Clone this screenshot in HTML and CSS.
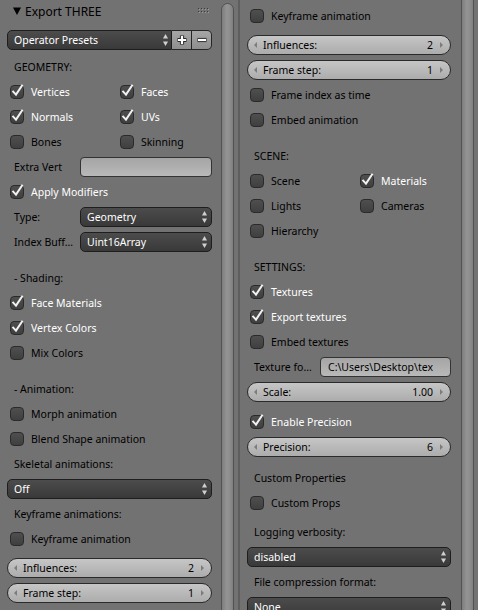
FILE: index.html
```html
<!DOCTYPE html>
<html>
<head>
<meta charset="utf-8">
<link rel="stylesheet" href="styles.css">
</head>
<body>
<div class="app">
  <div class="region left">
    <div class="content">
      <div class="head">
        <svg class="tri" width="8" height="8" viewBox="0 0 8 8"><polygon points="0,0.5 8,0.5 4,8" fill="#000"/></svg>
        <span class="title">Export THREE</span>
        <svg class="grip" width="11" height="6" viewBox="0 0 11 6">
          <g fill="#9a9a9a"><rect x="1" y="1" width="1" height="1"/><rect x="4" y="1" width="1" height="1"/><rect x="7" y="1" width="1" height="1"/><rect x="10" y="1" width="1" height="1"/><rect x="1" y="4" width="1" height="1"/><rect x="4" y="4" width="1" height="1"/><rect x="7" y="4" width="1" height="1"/><rect x="10" y="4" width="1" height="1"/></g>
          <g fill="#3c3c3c"><rect x="0" y="0" width="1" height="1"/><rect x="3" y="0" width="1" height="1"/><rect x="6" y="0" width="1" height="1"/><rect x="9" y="0" width="1" height="1"/><rect x="0" y="3" width="1" height="1"/><rect x="3" y="3" width="1" height="1"/><rect x="6" y="3" width="1" height="1"/><rect x="9" y="3" width="1" height="1"/></g>
        </svg>
      </div>
      <div class="presets">
        <div class="menu joined"><span class="mtext">Operator Presets</span><svg class="ud" width="5" height="12" viewBox="0 0 5 12"><polygon points="2.5,0 5,4.5 0,4.5"/><polygon points="0,7.5 5,7.5 2.5,12"/></svg></div>
        <div class="btn"><svg width="12" height="12" viewBox="0 0 12 12"><path d="M6 1.5V10.5M1.5 6H10.5" stroke="#2a2a2a" stroke-width="4.2" fill="none"/><path d="M6 2V10M2 6H10" stroke="#fff" stroke-width="2.2" fill="none"/></svg></div>
        <div class="btn last"><svg width="12" height="12" viewBox="0 0 12 12"><path d="M1.5 6H10.5" stroke="#2a2a2a" stroke-width="4.2" fill="none"/><path d="M2 6H10" stroke="#fff" stroke-width="2.2" fill="none"/></svg></div>
      </div>
      <div class="row lbl top4">GEOMETRY:</div>
      <div class="grid2">
        <div class="row check on"><span class="box"><svg viewBox="0 0 14 14"><path d="M3.2 6.6L6 9.6L12 0.6"/></svg></span><span class="ct">Vertices</span></div>
        <div class="row check on"><span class="box"><svg viewBox="0 0 14 14"><path d="M3.2 6.6L6 9.6L12 0.6"/></svg></span><span class="ct">Faces</span></div>
        <div class="row check on"><span class="box"><svg viewBox="0 0 14 14"><path d="M3.2 6.6L6 9.6L12 0.6"/></svg></span><span class="ct">Normals</span></div>
        <div class="row check on"><span class="box"><svg viewBox="0 0 14 14"><path d="M3.2 6.6L6 9.6L12 0.6"/></svg></span><span class="ct">UVs</span></div>
        <div class="row check"><span class="box"></span><span class="ct">Bones</span></div>
        <div class="row check"><span class="box"></span><span class="ct">Skinning</span></div>
      </div>
      <div class="row prop"><span class="plabel">Extra Vert</span><div class="field"></div></div>
      <div class="row check on"><span class="box"><svg viewBox="0 0 14 14"><path d="M3.2 6.6L6 9.6L12 0.6"/></svg></span><span class="ct">Apply Modifiers</span></div>
      <div class="row prop"><span class="plabel">Type:</span><div class="menu"><span class="mtext">Geometry</span><svg class="ud" width="5" height="12" viewBox="0 0 5 12"><polygon points="2.5,0 5,4.5 0,4.5"/><polygon points="0,7.5 5,7.5 2.5,12"/></svg></div></div>
      <div class="row prop"><span class="plabel">Index Buff…</span><div class="menu"><span class="mtext">Uint16Array</span><svg class="ud" width="5" height="12" viewBox="0 0 5 12"><polygon points="2.5,0 5,4.5 0,4.5"/><polygon points="0,7.5 5,7.5 2.5,12"/></svg></div></div>
      <div class="sep"></div>
      <div class="row lbl">- Shading:</div>
      <div class="row check on"><span class="box"><svg viewBox="0 0 14 14"><path d="M3.2 6.6L6 9.6L12 0.6"/></svg></span><span class="ct">Face Materials</span></div>
      <div class="row check on"><span class="box"><svg viewBox="0 0 14 14"><path d="M3.2 6.6L6 9.6L12 0.6"/></svg></span><span class="ct">Vertex Colors</span></div>
      <div class="row check"><span class="box"></span><span class="ct">Mix Colors</span></div>
      <div class="sep"></div>
      <div class="row lbl">- Animation:</div>
      <div class="row check"><span class="box"></span><span class="ct">Morph animation</span></div>
      <div class="row check"><span class="box"></span><span class="ct">Blend Shape animation</span></div>
      <div class="row lbl">Skeletal animations:</div>
      <div class="row"><div class="menu"><span class="mtext">Off</span><svg class="ud" width="5" height="12" viewBox="0 0 5 12"><polygon points="2.5,0 5,4.5 0,4.5"/><polygon points="0,7.5 5,7.5 2.5,12"/></svg></div></div>
      <div class="row lbl">Keyframe animations:</div>
      <div class="row check"><span class="box"></span><span class="ct">Keyframe animation</span></div>
      <div class="row slrow top4"><div class="slider"><svg class="arr" width="3" height="6" viewBox="0 0 3 6"><polygon points="3,0 3,6 0,3"/></svg><span class="sl">Influences:</span><span class="sv">2</span><svg class="arr r" width="3" height="6" viewBox="0 0 3 6"><polygon points="0,0 0,6 3,3"/></svg></div></div>
      <div class="row slrow"><div class="slider"><svg class="arr" width="3" height="6" viewBox="0 0 3 6"><polygon points="3,0 3,6 0,3"/></svg><span class="sl">Frame step:</span><span class="sv">1</span><svg class="arr r" width="3" height="6" viewBox="0 0 3 6"><polygon points="0,0 0,6 3,3"/></svg></div></div>
    </div>
    <div class="thumb tl"></div>
  </div>

  <div class="region right">
    <div class="content rc">
      <div class="row check"><span class="box"></span><span class="ct">Keyframe animation</span></div>
      <div class="row slrow top4"><div class="slider"><svg class="arr" width="3" height="6" viewBox="0 0 3 6"><polygon points="3,0 3,6 0,3"/></svg><span class="sl">Influences:</span><span class="sv">2</span><svg class="arr r" width="3" height="6" viewBox="0 0 3 6"><polygon points="0,0 0,6 3,3"/></svg></div></div>
      <div class="row slrow"><div class="slider"><svg class="arr" width="3" height="6" viewBox="0 0 3 6"><polygon points="3,0 3,6 0,3"/></svg><span class="sl">Frame step:</span><span class="sv">1</span><svg class="arr r" width="3" height="6" viewBox="0 0 3 6"><polygon points="0,0 0,6 3,3"/></svg></div></div>
      <div class="row check"><span class="box"></span><span class="ct">Frame index as time</span></div>
      <div class="row check"><span class="box"></span><span class="ct">Embed animation</span></div>
      <div class="sep"></div>
      <div class="row lbl">SCENE:</div>
      <div class="grid2">
        <div class="row check"><span class="box"></span><span class="ct">Scene</span></div>
        <div class="row check on"><span class="box"><svg viewBox="0 0 14 14"><path d="M3.2 6.6L6 9.6L12 0.6"/></svg></span><span class="ct">Materials</span></div>
        <div class="row check"><span class="box"></span><span class="ct">Lights</span></div>
        <div class="row check"><span class="box"></span><span class="ct">Cameras</span></div>
        <div class="row check"><span class="box"></span><span class="ct">Hierarchy</span></div>
      </div>
      <div class="sep"></div>
      <div class="row lbl">SETTINGS:</div>
      <div class="row check on"><span class="box"><svg viewBox="0 0 14 14"><path d="M3.2 6.6L6 9.6L12 0.6"/></svg></span><span class="ct">Textures</span></div>
      <div class="row check on"><span class="box"><svg viewBox="0 0 14 14"><path d="M3.2 6.6L6 9.6L12 0.6"/></svg></span><span class="ct">Export textures</span></div>
      <div class="row check"><span class="box"></span><span class="ct">Embed textures</span></div>
      <div class="row prop"><span class="plabel">Texture fo…</span><div class="field"><span class="ftext">C:\Users\Desktop\tex</span></div></div>
      <div class="row slrow"><div class="slider"><svg class="arr" width="3" height="6" viewBox="0 0 3 6"><polygon points="3,0 3,6 0,3"/></svg><span class="sl">Scale:</span><span class="sv">1.00</span><svg class="arr r" width="3" height="6" viewBox="0 0 3 6"><polygon points="0,0 0,6 3,3"/></svg></div></div>
      <div class="row check on top5"><span class="box"><svg viewBox="0 0 14 14"><path d="M3.2 6.6L6 9.6L12 0.6"/></svg></span><span class="ct">Enable Precision</span></div>
      <div class="row slrow"><div class="slider"><svg class="arr" width="3" height="6" viewBox="0 0 3 6"><polygon points="3,0 3,6 0,3"/></svg><span class="sl">Precision:</span><span class="sv">6</span><svg class="arr r" width="3" height="6" viewBox="0 0 3 6"><polygon points="0,0 0,6 3,3"/></svg></div></div>
      <div class="row lbl top6">Custom Properties</div>
      <div class="row check"><span class="box"></span><span class="ct">Custom Props</span></div>
      <div class="row lbl top4">Logging verbosity:</div>
      <div class="row"><div class="menu"><span class="mtext">disabled</span><svg class="ud" width="5" height="12" viewBox="0 0 5 12"><polygon points="2.5,0 5,4.5 0,4.5"/><polygon points="0,7.5 5,7.5 2.5,12"/></svg></div></div>
      <div class="row lbl">File compression format:</div>
      <div class="row"><div class="menu"><span class="mtext">None</span><svg class="ud" width="5" height="12" viewBox="0 0 5 12"><polygon points="2.5,0 5,4.5 0,4.5"/><polygon points="0,7.5 5,7.5 2.5,12"/></svg></div></div>
    </div>
    <div class="thumb tr"></div>
  </div>
</div>
</body>
</html>
```

FILE: styles.css
```css
html, body {
  margin: 0;
  padding: 0;
}
body {
  width: 478px;
  height: 610px;
  overflow: hidden;
  background: #727272;
  font-family: "Noto Sans", "Open Sans", sans-serif;
  font-size: 10.5px;
  color: #000;
}
.app {
  display: flex;
  height: 610px;
  overflow: hidden;
}
.region {
  display: flex;
  height: 610px;
  overflow: hidden;
  flex: none;
}
.region.left {
  width: 238px;
  border-right: 2px solid #5e5e5e;
}
.region.right {
  width: 238px;
}
.content {
  flex: none;
  width: 205px;
  padding-left: 7px;
}
.content.rc {
  width: 204px;
  padding-top: 3.5px;
}
.thumb {
  flex: none;
  width: 13px;
  box-sizing: border-box;
  border: 1px solid #525252;
  background: linear-gradient(to right, #7e7e7e, #949494 45%, #8c8c8c 75%, #7e7e7e);
}
.thumb.tl {
  margin-left: 9px;
  margin-top: 3px;
  height: 640px;
  border-radius: 7px 7px 0 0;
}
.thumb.tr {
  margin-left: 10px;
  margin-top: -20px;
  height: 660px;
  border-radius: 7px;
  border-top: none;
  border-bottom: none;
}

/* header */
.head {
  height: 22px;
  display: flex;
  align-items: center;
}
.tri {
  margin-left: 6px;
  flex: none;
}
.title {
  margin-left: 4px;
  font-size: 12px;
}
.grip {
  margin-left: auto;
  margin-right: 3px;
}

/* presets */
.presets {
  margin-top: 8px;
  height: 20px;
  display: flex;
}
.btn {
  width: 20px;
  height: 20px;
  box-sizing: border-box;
  border: 1px solid #262626;
  border-left: none;
  background: linear-gradient(#a6a6a6, #8e8e8e);
  display: flex;
  align-items: center;
  justify-content: center;
  flex: none;
}
.btn.last {
  border-radius: 0 5px 5px 0;
}

/* rows */
.row {
  height: 25px;
  display: flex;
  align-items: center;
  white-space: nowrap;
}
.lbl {
  padding-left: 7px;
}
.top4 { margin-top: 4px; }
.top5 { margin-top: 5px; }
.top6 { margin-top: 6px; }
.sep { height: 11px; }

.grid2 {
  display: grid;
  grid-template-columns: 110px 1fr;
}

/* checkboxes */
.check {
  padding-left: 3px;
}
.box {
  flex: none;
  width: 14px;
  height: 14px;
  box-sizing: border-box;
  border: 1px solid #2a2a2a;
  border-radius: 4px;
  background: linear-gradient(#4f4f4f, #3f3f3f);
  position: relative;
}
.box svg {
  position: absolute;
  left: -1px;
  top: -1px;
  width: 14px;
  height: 14px;
  overflow: visible;
}
.box svg path {
  fill: none;
  stroke: #f2f2f2;
  stroke-width: 2;
  stroke-linecap: square;
}
.ct {
  margin-left: 7px;
}
.check.on .ct {
  color: #fff;
}

/* menus */
.menu {
  flex: 1;
  height: 20px;
  box-sizing: border-box;
  border: 1px solid #1e1e1e;
  border-radius: 5px;
  background: linear-gradient(#4c4c4c, #393939);
  color: #fff;
  display: flex;
  align-items: center;
  padding-left: 6px;
  padding-right: 4px;
}
.menu.joined {
  border-radius: 5px 0 0 5px;
  padding-right: 3px;
}
.mtext {
  flex: 1;
}
.ud {
  flex: none;
  fill: #d0d0d0;
}

/* property rows */
.prop .plabel {
  flex: none;
  width: 73px;
  box-sizing: border-box;
  padding-left: 7px;
}
.field {
  flex: 1;
  height: 20px;
  box-sizing: border-box;
  border: 1px solid #333;
  border-radius: 4px;
  background: linear-gradient(#a5a5a5, #b9b9b9);
  display: flex;
  align-items: center;
  padding-left: 7px;
}

/* sliders */
.slider {
  flex: 1;
  height: 20px;
  box-sizing: border-box;
  border: 1px solid #2a2a2a;
  border-radius: 10px;
  background: linear-gradient(#c6c6c6, #acacac);
  display: flex;
  align-items: center;
}
.arr {
  flex: none;
  fill: #7c7c7c;
  margin-left: 6px;
}
.arr.r {
  margin-left: 7px;
  margin-right: 7px;
}
.sl {
  margin-left: 6px;
  flex: 1;
}
.sv {
  flex: none;
}
```
